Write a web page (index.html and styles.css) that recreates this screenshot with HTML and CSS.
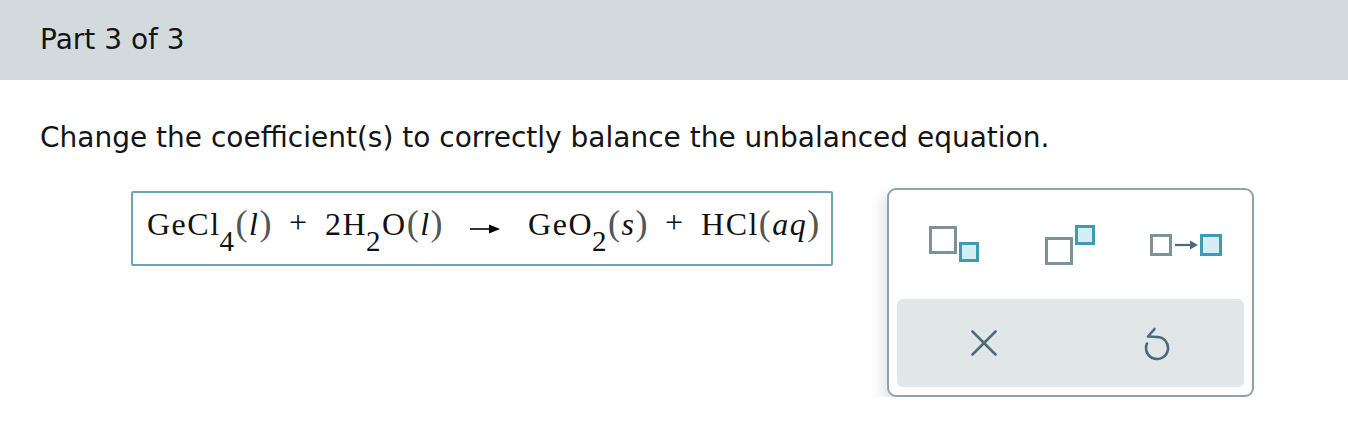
FILE: index.html
```html
<!DOCTYPE html>
<html>
<head>
<meta charset="utf-8">
<link rel="stylesheet" href="styles.css">
</head>
<body>
<header class="part-bar">Part 3 of 3</header>
<main class="content">
  <p class="prompt">Change the coefficient(s) to correctly balance the unbalanced equation.</p>
  <div class="work-row">
    <div class="equation-box">
      <span class="mol">GeCl<span class="sub">4</span><span class="paren">(</span><i>l</i><span class="paren">)</span></span>
      <span class="op">+</span>
      <span class="mol">2H<span class="sub">2</span>O<span class="paren">(</span><i>l</i><span class="paren">)</span></span>
      <span class="arrow"><svg width="30" height="12" viewBox="0 0 30 12"><path d="M0 6H22" stroke="#000" stroke-width="1.6"/><path d="M19 1.5L30 6L19 10.5Z" fill="#000"/></svg></span>
      <span class="mol">GeO<span class="sub">2</span><span class="paren">(</span><i>s</i><span class="paren">)</span></span>
      <span class="op">+</span>
      <span class="mol">HCl<span class="paren">(</span><i>a</i><i>q</i><span class="paren">)</span></span>
    </div>
    <div class="palette">
      <div class="tool-row">
        <button class="tool">
          <svg width="52" height="38" viewBox="0 0 52 38"><rect x="1.5" y="1.5" width="25" height="25" class="sq-gray"/><rect x="31.5" y="17.5" width="17" height="17" class="sq-teal"/></svg>
        </button>
        <button class="tool">
          <svg width="50" height="40" viewBox="0 0 50 40"><rect x="1.5" y="13.5" width="25" height="25" class="sq-gray"/><rect x="31.5" y="1.5" width="17" height="17" class="sq-teal"/></svg>
        </button>
        <button class="tool">
          <svg width="72" height="22" viewBox="0 0 72 22"><rect x="1.5" y="1.5" width="19" height="19" class="sq-gray"/><path d="M25 11H42" stroke="#4b6b78" stroke-width="2.2"/><path d="M40 6.5L48 11L40 15.5Z" fill="#4b6b78"/><rect x="51.5" y="1.5" width="19" height="19" class="sq-teal"/></svg>
        </button>
      </div>
      <div class="action-row">
        <button class="action">
          <svg width="26" height="26" viewBox="0 0 26 26"><path d="M1.5 1.5L24.5 24.5M24.5 1.5L1.5 24.5" stroke="#4b6b78" stroke-width="2.6" stroke-linecap="round"/></svg>
        </button>
        <button class="action">
          <svg width="28" height="36" viewBox="0 0 28 36"><path d="M14 12A11 11 0 1 1 4 18.5" fill="none" stroke="#4b6b78" stroke-width="2.6" stroke-linecap="round"/><path d="M11.5 4L5 11.5L14 12" fill="none" stroke="#4b6b78" stroke-width="2.6" stroke-linecap="round" stroke-linejoin="round"/></svg>
        </button>
      </div>
    </div>
  </div>
</main>
</body>
</html>
```

FILE: styles.css
```css
html, body {
  margin: 0;
  padding: 0;
  background: #fff;
}
body {
  font-family: "DejaVu Sans", Verdana, sans-serif;
  color: #141414;
}
.part-bar {
  height: 80px;
  background: #d3dade;
  display: flex;
  align-items: center;
  padding: 0 0 2px 40px;
  font-size: 28px;
  box-sizing: border-box;
}
.content {
  padding: 0 40px;
}
.prompt {
  margin: 0;
  padding-top: 41px;
  font-size: 28px;
  line-height: 34px;
}
.work-row {
  display: flex;
  align-items: flex-start;
  margin-top: 33px;
  margin-left: 91px;
}
.equation-box {
  margin-top: 3px;
  width: 702px;
  height: 75px;
  box-sizing: border-box;
  border: 2px solid #6fa3b8;
  border-radius: 2px;
  display: flex;
  align-items: center;
  padding: 0 0 12px 14px;
  font-family: "Liberation Serif", "Times New Roman", serif;
  font-size: 32px;
  color: #111;
}
.mol {
  white-space: nowrap;
  letter-spacing: 1.5px;
}
.sub {
  font-size: 29px;
  position: relative;
  top: 0.56em;
  margin-left: -1px;
}
.paren {
  color: #555;
  font-size: 36px;
}
.op {
  margin: 0 18px 0 16px;
}
.arrow {
  display: flex;
  align-items: center;
  margin: 12px 28px 0 26px;
}
.palette {
  margin-left: 54px;
  width: 367px;
  height: 209px;
  box-sizing: border-box;
  border: 2px solid #8fa3aa;
  border-radius: 9px;
  padding: 0 8px 8px;
  display: flex;
  flex-direction: column;
  box-shadow: -6px 6px 12px rgba(40, 60, 70, 0.12);
  background: #fff;
}
.tool-row {
  flex: 1;
  display: grid;
  grid-template-columns: repeat(3, 1fr);
  align-items: center;
}
button {
  border: none;
  background: transparent;
  padding: 0;
  margin: 0;
  display: flex;
  align-items: center;
  justify-content: center;
  cursor: pointer;
}
.tool {
  height: 100%;
}
.sq-gray {
  fill: #fff;
  stroke: #7a9298;
  stroke-width: 3;
}
.sq-teal {
  fill: #d5eef3;
  stroke: #3f9bb4;
  stroke-width: 3;
}
.action-row {
  height: 88px;
  background: #e1e6e9;
  border-radius: 6px;
  display: grid;
  grid-template-columns: 1fr 1fr;
}
.action {
  height: 100%;
}
```
